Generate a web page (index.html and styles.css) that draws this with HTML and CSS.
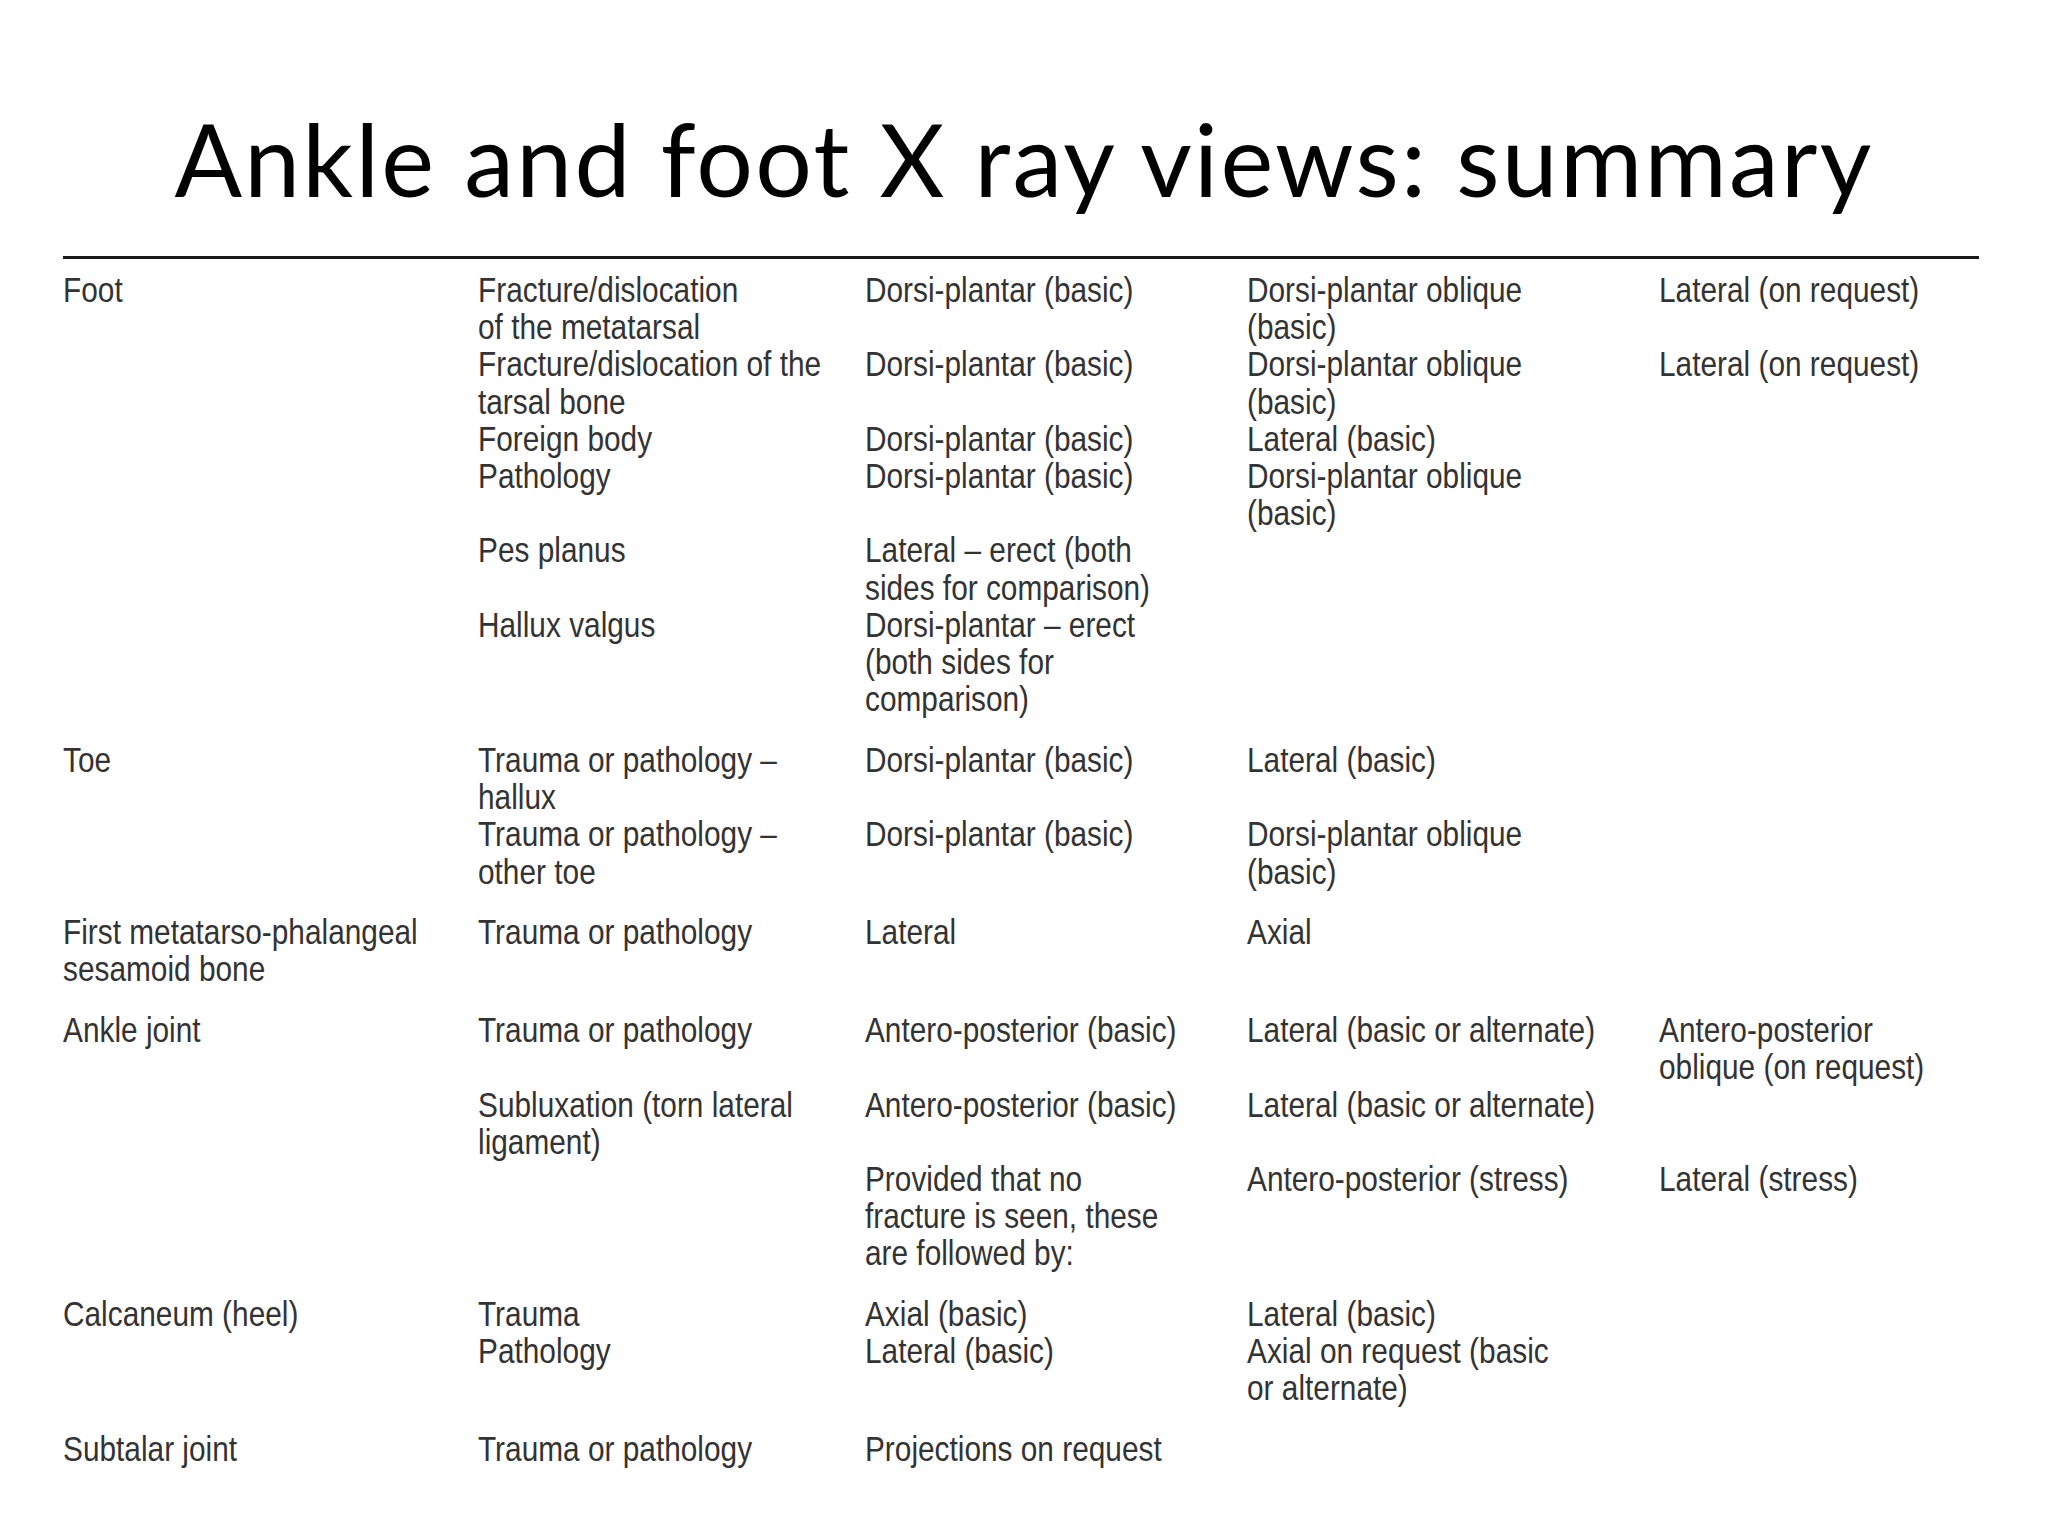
FILE: index.html
```html
<!DOCTYPE html>
<html lang="en">
<head>
<meta charset="utf-8">
<title>Ankle and foot X ray views: summary</title>
<link rel="stylesheet" href="styles.css">
</head>
<body>
<div class="slide">
  <h1 class="title">Ankle and foot X ray views: summary</h1>
  <div class="content">
    <div class="rule"></div>
    <table class="views">
      <colgroup>
        <col class="c1"><col class="c2"><col class="c3"><col class="c4"><col class="c5">
      </colgroup>
      <tbody>
        <tr>
          <td rowspan="6">Foot</td>
          <td>Fracture/dislocation<br>of the metatarsal</td>
          <td>Dorsi-plantar (basic)</td>
          <td>Dorsi-plantar oblique<br>(basic)</td>
          <td>Lateral (on request)</td>
        </tr>
        <tr>
          <td>Fracture/dislocation of the<br>tarsal bone</td>
          <td>Dorsi-plantar (basic)</td>
          <td>Dorsi-plantar oblique<br>(basic)</td>
          <td>Lateral (on request)</td>
        </tr>
        <tr>
          <td>Foreign body</td>
          <td>Dorsi-plantar (basic)</td>
          <td>Lateral (basic)</td>
          <td></td>
        </tr>
        <tr>
          <td>Pathology</td>
          <td>Dorsi-plantar (basic)</td>
          <td>Dorsi-plantar oblique<br>(basic)</td>
          <td></td>
        </tr>
        <tr>
          <td>Pes planus</td>
          <td>Lateral – erect (both<br>sides for comparison)</td>
          <td></td>
          <td></td>
        </tr>
        <tr>
          <td>Hallux valgus</td>
          <td>Dorsi-plantar – erect<br>(both sides for<br>comparison)</td>
          <td></td>
          <td></td>
        </tr>

        <tr class="grp">
          <td rowspan="2">Toe</td>
          <td>Trauma or pathology –<br>hallux</td>
          <td>Dorsi-plantar (basic)</td>
          <td>Lateral (basic)</td>
          <td></td>
        </tr>
        <tr>
          <td>Trauma or pathology –<br>other toe</td>
          <td>Dorsi-plantar (basic)</td>
          <td>Dorsi-plantar oblique<br>(basic)</td>
          <td></td>
        </tr>

        <tr class="grp">
          <td>First metatarso-phalangeal<br>sesamoid bone</td>
          <td>Trauma or pathology</td>
          <td>Lateral</td>
          <td>Axial</td>
          <td></td>
        </tr>

        <tr class="grp">
          <td rowspan="3">Ankle joint</td>
          <td>Trauma or pathology</td>
          <td>Antero-posterior (basic)</td>
          <td>Lateral (basic or alternate)</td>
          <td>Antero-posterior<br>oblique (on request)</td>
        </tr>
        <tr>
          <td>Subluxation (torn lateral<br>ligament)</td>
          <td>Antero-posterior (basic)</td>
          <td>Lateral (basic or alternate)</td>
          <td></td>
        </tr>
        <tr>
          <td></td>
          <td>Provided that no<br>fracture is seen, these<br>are followed by:</td>
          <td>Antero-posterior (stress)</td>
          <td>Lateral (stress)</td>
        </tr>

        <tr class="grp">
          <td>Calcaneum (heel)</td>
          <td>Trauma<br>Pathology</td>
          <td>Axial (basic)<br>Lateral (basic)</td>
          <td>Lateral (basic)<br>Axial on request (basic<br>or alternate)</td>
          <td></td>
        </tr>

        <tr class="grp">
          <td>Subtalar joint</td>
          <td>Trauma or pathology</td>
          <td>Projections on request</td>
          <td></td>
          <td></td>
        </tr>
      </tbody>
    </table>
  </div>
</div>
</body>
</html>
```
FILE: styles.css
```css
html, body {
  margin: 0;
  padding: 0;
  background: #ffffff;
}

.slide {
  width: 2048px;
  height: 1536px;
  overflow: hidden;
}

.title {
  margin: 98px 0 0 0;
  font-family: Lato, "Open Sans", sans-serif;
  font-weight: 400;
  font-size: 100px;
  line-height: 120px;
  letter-spacing: 2.3px;
  text-align: center;
  color: #000000;
}

.content {
  margin-left: 63px;
  width: 1916px;
}

.rule {
  margin-top: 38px;
  height: 3px;
  background: #1a1a1a;
}

/* The source face is a condensed sans; emulate it by compressing the
   table horizontally. Column widths are the on-screen widths / 0.852. */
.views {
  margin-top: 12px;
  width: 2248.9px;
  table-layout: fixed;
  border-collapse: collapse;
  transform: scaleX(0.852);
  transform-origin: left top;
  font-family: "Liberation Sans", Arial, sans-serif;
  font-size: 35px;
  line-height: 37.2px;
  color: #333333;
}

.c1 { width: 487.1px; }
.c2 { width: 454.2px; }
.c3 { width: 448.4px; }
.c4 { width: 483.6px; }
.c5 { width: 375.6px; }

.views td {
  padding: 0;
  vertical-align: top;
  white-space: nowrap;
}

.views tr.grp td {
  padding-top: 23.5px;
}
```
